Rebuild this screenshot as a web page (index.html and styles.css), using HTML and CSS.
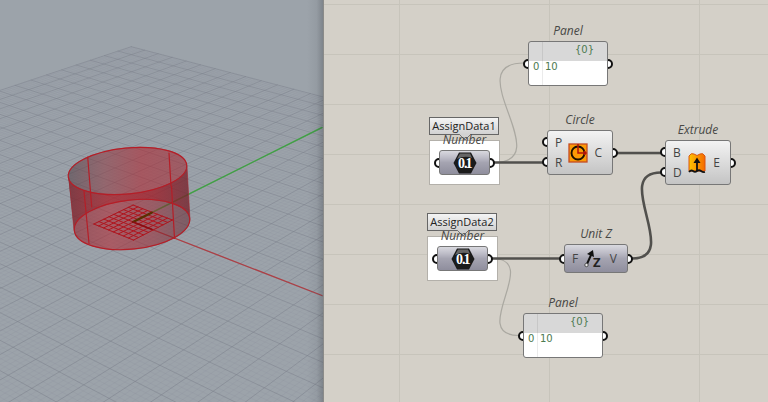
FILE: index.html
```html
<!DOCTYPE html>
<html lang="en">
<head>
<meta charset="utf-8">
<title>Extruded circle definition</title>
<link rel="stylesheet" href="styles.css">
</head>
<body>
<main class="workspace">
  <section class="viewport" aria-label="Perspective viewport">
    <svg class="scene" viewBox="0 0 324 402" preserveAspectRatio="xMinYMin slice" aria-hidden="true">
      <defs>
        <linearGradient id="back-wall" x1="68" x2="190" y1="0" y2="0" gradientUnits="userSpaceOnUse">
          <stop offset="0" stop-color="#4b3a40" stop-opacity=".55"/>
          <stop offset=".3" stop-color="#8c2d34" stop-opacity=".5"/>
          <stop offset=".6" stop-color="#b0141e" stop-opacity=".52"/>
          <stop offset="1" stop-color="#9e2029" stop-opacity=".52"/>
        </linearGradient>
        <linearGradient id="front-wall" x1="68" x2="190" y1="0" y2="0" gradientUnits="userSpaceOnUse">
          <stop offset="0" stop-color="#8a1822" stop-opacity=".55"/>
          <stop offset=".35" stop-color="#b61822" stop-opacity=".5"/>
          <stop offset=".7" stop-color="#981e28" stop-opacity=".52"/>
          <stop offset="1" stop-color="#5c2029" stop-opacity=".52"/>
        </linearGradient>
      </defs>
      <path id="minor" class="grid-minor"/>
      <path id="major" class="grid-major"/>
      <path class="axis-x" d="M133 222 322 295.500"/>
      <path class="axis-y" d="M133 222 322 127.500"/>
      <path fill="url(#back-wall)" d="M68 175A59.500 23 -5.700 0 1 187 166L190 220A58 24.600 -6 0 0 74 230Z"/>
      <path fill="url(#front-wall)" d="M68 175A59.500 23 -5.700 0 0 187 166L190 220A58 24.600 -6 0 1 74 230Z"/>
      <path id="plane" class="plane"/>
      <path class="plane-y" d="M133 222 152 212.500"/>
      <path class="plane-x" d="M133 222 152 229.500"/>
      <g class="edges">
        <ellipse cx="127.500" cy="171" rx="59.500" ry="23" transform="rotate(-5.700 127.500 171)"/>
        <ellipse cx="132" cy="224.500" rx="58" ry="24.600" transform="rotate(-6 132 224.500)"/>
        <path d="M87.700 157 91.700 207M169 153 171 186M84 191 89 243.500M171.500 186 174.500 238.500"/>
      </g>
      <path class="silhouette" d="M69 178 74 230M187 166 190 220"/>
    </svg>
  </section>

  <section class="canvas" aria-label="Definition canvas">
    <div class="group group-1"></div>
    <div class="group group-2"></div>
    <svg class="wires" aria-hidden="true">
      <path class="wire-thin" d="M170 162.500C235 162.500 133 63 200 63"/>
      <path class="wire-thin" d="M168 258.500C219 258.500 143 335.500 195 335.500"/>
      <path class="wire" d="M170 162.500H220M168 258.500H237M293 153H337M308 258.500C359 258.500 286 172.500 337 172.500"/>
    </svg>

    <article class="node panel panel-1">
      <h2 class="title">Panel</h2>
      <i class="grip in"></i><i class="grip out"></i>
      <div class="sheet"><div class="path">{0}</div><div class="row"><span class="index">0</span><span>10</span></div></div>
    </article>

    <div class="tag tag-1">AssignData1<svg class="tip" viewBox="0 0 14 7"><path d="M1 0 7 6 13 0" fill="#d2d2d2" stroke="#777"/></svg></div>
    <div class="tag tag-2">AssignData2<svg class="tip" viewBox="0 0 14 7"><path d="M1 0 7 6 13 0" fill="#d2d2d2" stroke="#777"/></svg></div>
    <article class="node number number-1">
      <h2 class="title">Number</h2>
      <i class="grip in"></i><i class="grip out"></i>
      <div class="body dark">
        <svg class="hex" viewBox="0 0 24 22"><path d="M6 .5H18L23.500 11 18 21.500H6L.5 11Z" fill="#1b1b1b"/><path d="M7 1.500H17L19 6Q12 3 4 7Z" fill="#666"/><text x="5 11 12.500" y="16">0.1</text></svg>
      </div>
    </article>
    <article class="node number number-2">
      <h2 class="title">Number</h2>
      <i class="grip in"></i><i class="grip out"></i>
      <div class="body dark">
        <svg class="hex" viewBox="0 0 24 22"><path d="M6 .5H18L23.500 11 18 21.500H6L.5 11Z" fill="#1b1b1b"/><path d="M7 1.500H17L19 6Q12 3 4 7Z" fill="#666"/><text x="5 11 12.500" y="16">0.1</text></svg>
      </div>
    </article>

    <article class="node component circle">
      <h2 class="title">Circle</h2>
      <i class="grip in upper"></i><i class="grip in lower"></i><i class="grip out"></i>
      <div class="body">
        <div class="inputs"><span>P</span><span>R</span></div>
        <svg class="icon" viewBox="0 0 20 20"><rect x="1" y="1" width="18" height="18" fill="#fb9a05" stroke="#c44a22" stroke-width="1.300"/><circle cx="10" cy="10" r="6.500" fill="none" stroke="#1a1000" stroke-width="1.900"/><path d="M10 1V10H18M16 8 18 10 16 12" fill="none" stroke="#b51208" stroke-width="1.500"/></svg>
        <span>C</span>
      </div>
    </article>

    <article class="node component extrude">
      <h2 class="title">Extrude</h2>
      <i class="grip in upper"></i><i class="grip in lower"></i><i class="grip out"></i>
      <div class="body">
        <div class="inputs"><span>B</span><span>D</span></div>
        <svg class="icon" viewBox="0 0 20 20"><defs><linearGradient id="skin"><stop offset="0" stop-color="#ffc400"/><stop offset="1" stop-color="#f56a00"/></linearGradient></defs><path d="M1 18V3Q3 -.5 6 1L9 2.500 12 1Q15 -.5 17 3V18Z" fill="url(#skin)" stroke="#d85512"/><path d="M1 19Q3 16.500 5 18T9 18T13 18T17 19" fill="none" stroke="#111" stroke-width="1.800"/><path d="M9 18V8" stroke="#111" stroke-width="1.800"/><path d="M9 4.500 12.500 10H5.500Z" fill="#111"/></svg>
        <span>E</span>
      </div>
    </article>

    <article class="node vector">
      <h2 class="title">Unit Z</h2>
      <i class="grip in"></i><i class="grip out"></i>
      <div class="body dark">
        <span>F</span>
        <svg class="icon" viewBox="0 0 20 20"><path d="M3 15 7 6" stroke="#111" stroke-width="2"/><path d="M9 1 10 8 3 5Z" fill="#111"/><circle cx="2.500" cy="16" r="1.700" fill="#eee" stroke="#333" stroke-width=".8"/><text class="z" x="9" y="18">Z</text></svg>
        <span>V</span>
      </div>
    </article>

    <article class="node panel panel-2">
      <h2 class="title">Panel</h2>
      <i class="grip in"></i><i class="grip out"></i>
      <div class="sheet"><div class="path">{0}</div><div class="row"><span class="index">0</span><span>10</span></div></div>
    </article>
  </section>
</main>
<script src="scene.js"></script>
</body>
</html>
```
FILE: styles.css
```css
* { box-sizing: border-box; }

body {
  margin: 0;
  font-family: "Open Sans", "Noto Sans", sans-serif;
  color: #444;
}

.workspace {
  display: grid;
  grid-template-columns: 27fr 37fr;
  min-height: 100vh;
}

/* Perspective view */
.viewport {
  position: relative;
  overflow: hidden;
  background: #9ca3aa;
  border-right: 1px solid #8b8b89;
}
.viewport::after {
  content: "";
  position: absolute;
  inset: 0 0 0 auto;
  width: 16px;
  background: linear-gradient(to right, transparent, rgba(60, 65, 72, .08) 60%, rgba(50, 54, 60, .28));
}
.scene { position: absolute; width: 100%; height: 100%; }
.scene path { stroke-linecap: round; }
.grid-minor { fill: none; stroke: #7c8490; stroke-width: .5; opacity: .22; }
.grid-major { fill: none; stroke: #7c808b; stroke-width: 1; opacity: .5; }
.axis-x { stroke: #ad3f45; stroke-width: 1.3; }
.axis-y { stroke: #42a046; stroke-width: 1.4; }
.plane { fill: none; stroke: #b0141d; stroke-width: 1; }
.plane-x { stroke: #8c0d12; stroke-width: 1.6; }
.plane-y { stroke: #5a3000; stroke-width: 2; }
.edges { fill: none; stroke: #b51e27; stroke-width: 1.2; }
.silhouette { fill: none; stroke: #a52a32; stroke-width: .8; opacity: .7; }

/* Node canvas */
.canvas {
  position: relative;
  isolation: isolate;
  overflow: hidden;
  background-color: #d4d0c8;
  background-image:
    linear-gradient(to right, #c7c4bb 1px, transparent 1px),
    linear-gradient(#c7c4bb 1px, transparent 1px);
  background-size: 150px 50px;
  background-position: 75px 4px;
}
.wires { position: absolute; inset: 0; width: 100%; height: 100%; fill: none; }
.wire { stroke: #51504d; stroke-width: 2.6; }
.wire-thin { stroke: #aaa8a1; stroke-width: 1.2; }

.group {
  position: absolute;
  width: 71px;
  height: 45px;
  background: #fff;
  border: 1px solid #b3b0aa;
}
.group-1 { left: 105px; top: 140px; }
.group-2 { left: 103px; top: 236px; }

.node { position: absolute; }
.title {
  position: absolute;
  bottom: 100%;
  left: 50%;
  transform: translateX(-50%);
  margin: 0 0 2px;
  font-size: 12px;
  line-height: 16px;
  font-weight: 400;
  font-style: italic;
  color: #484846;
  white-space: nowrap;
}

.grip {
  position: absolute;
  top: 50%;
  width: 10px;
  height: 10px;
  margin: -5px;
  background: #fff;
  border: 2px solid #111;
  border-radius: 50%;
}
.in { left: 0; }
.out { right: 0; }
.upper { top: 12px; }
.lower { top: 32px; }

.body, .sheet {
  position: relative;
  height: 100%;
  border: 1px solid #777;
  border-radius: 3px;
}
.body {
  display: flex;
  align-items: center;
  justify-content: space-between;
  padding: 0 10px 0 7px;
  font-size: 12px;
  line-height: 20px;
  background: linear-gradient(#f3f3f3, #dedede 45%, #c4c4c4);
}
.dark { background: linear-gradient(#d9d9df, #bcbbc6 30%, #a5a4b1 50%, #8f8e9d); }
.inputs { display: grid; }
.icon { width: 20px; height: 20px; overflow: visible; }
.z { font: bold 13px "Noto Sans", sans-serif; fill: #222; }

.component { width: 66px; height: 45px; }
.circle { left: 223px; top: 130px; }
.extrude { left: 341px; top: 140px; }
.vector { left: 240px; top: 244px; width: 64px; height: 29px; }

.number { width: 51px; height: 25px; }
.number .body { justify-content: center; padding: 0; }
.number-1 { left: 115px; top: 150px; }
.number-2 { left: 113px; top: 246px; }
.hex { width: 24px; height: 22px; }
.hex text {
  font: bold 14px "Liberation Serif", serif;
  fill: #fff;
}

.tag {
  position: absolute;
  width: 70px;
  height: 18px;
  border: 1px solid #666;
  background: linear-gradient(#f4f4f4, #d2d2d2);
  font-size: 11px;
  line-height: 16px;
  text-align: center;
  color: #222;
}
.tag-1 { left: 105px; top: 117px; }
.tag-2 { left: 103px; top: 213px; }
.tip { position: absolute; top: 100%; left: 28px; width: 14px; height: 7px; }

.panel { width: 80px; height: 45px; }
.panel-1 { left: 204px; top: 41px; }
.panel-2 { left: 199px; top: 313px; }
.sheet {
  overflow: hidden;
  background: linear-gradient(to right, transparent 13px, rgba(0, 0, 0, .08) 13px, rgba(0, 0, 0, .08) 14px, transparent 14px), linear-gradient(#d8d8d8 19px, #fff 19px);
  font-family: "DejaVu Sans", sans-serif;
  font-size: 10px;
  line-height: 16px;
  color: #4c7a50;
}
.path { padding-right: 13px; text-align: right; }
.row { display: flex; padding-left: 4px; margin-top: 1px; }
.index { width: 12px; }
```
FILE: scene.js
```js
// Ground plane projection: an origin and the vanishing points of both axes.
const origin = [133.3, 222];
const vanishX = [-1212, -305];
const vanishY = [1193, -307];

function project(x, y) {
  const a = -0.002936 * x;
  const b = 0.003689 * y;
  const w = 1 + a + b;
  return [0, 1]
    .map((i) => ((origin[i] + a * vanishX[i] + b * vanishY[i]) / w).toFixed(2))
    .join(" ");
}

function gridPath(extent, step, skip) {
  const count = Math.round(extent / step);
  let d = "";
  for (let i = -count; i <= count; i++) {
    if (skip && i % skip === 0) continue;
    const p = i * step;
    d += `M${project(p, -extent)}L${project(p, extent)}`;
    d += `M${project(-extent, p)}L${project(extent, p)}`;
  }
  return d;
}

document.getElementById("major").setAttribute("d", gridPath(75, 5));
document.getElementById("minor").setAttribute("d", gridPath(75, 1, 5));
document.getElementById("plane").setAttribute("d", gridPath(5, 1.25));
```
